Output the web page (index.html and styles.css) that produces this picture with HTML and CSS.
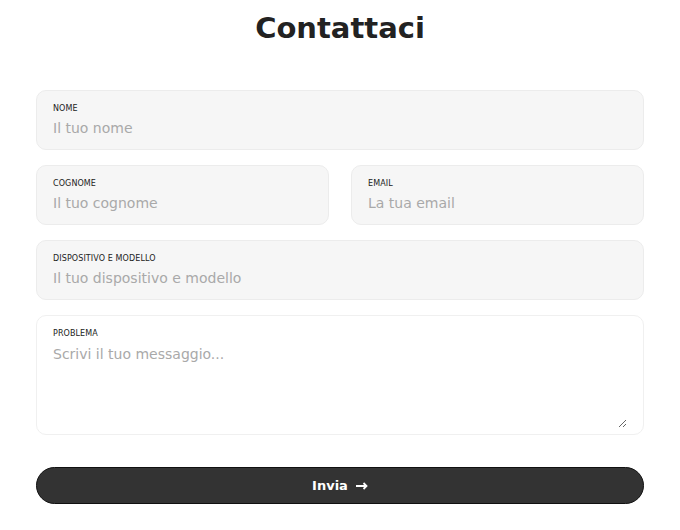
FILE: index.html
```html
<!DOCTYPE html>
<html lang="it">
<head>
    <meta charset="UTF-8">
    <meta name="viewport" content="width=device-width, initial-scale=1.0">
    <title>Contattaci</title>
    <link rel="stylesheet" href="styles.css">
</head>
<body>
    <div class="contact">
        <h1 class="contact-title">Contattaci</h1>

        <form class="contact-form">
            <div class="field">
                <label for="nome">Nome</label>
                <input type="text" id="nome" placeholder="Il tuo nome">
            </div>

            <div class="row">
                <div class="field">
                    <label for="cognome">Cognome</label>
                    <input type="text" id="cognome" placeholder="Il tuo cognome">
                </div>
                <div class="field">
                    <label for="email">Email</label>
                    <input type="email" id="email" placeholder="La tua email">
                </div>
            </div>

            <div class="field">
                <label for="dispositivo">Dispositivo e modello</label>
                <input type="text" id="dispositivo" placeholder="Il tuo dispositivo e modello">
            </div>

            <div class="field field-area">
                <label for="problema">Problema</label>
                <textarea id="problema" placeholder="Scrivi il tuo messaggio..."></textarea>
            </div>

            <button type="submit" class="btn-send">
                Invia
                <svg class="arrow" width="12" height="8" viewBox="0 0 12 8">
                    <path d="M0 4h10.5M7.5 1l3 3-3 3" fill="none" stroke="#fff" stroke-width="1.8"/>
                </svg>
            </button>
        </form>
    </div>
</body>
</html>
```

FILE: styles.css
```css
body {
    margin: 0;
    padding: 0;
    font-family: 'DejaVu Sans', 'Open Sans', sans-serif;
    background-color: #fff;
    color: #222;
}

.contact {
    max-width: 608px;
    margin: 0 auto;
    padding-top: 10px;
}

.contact-title {
    margin: 0 0 44px;
    text-align: center;
    font-size: 29px;
    font-weight: 800;
    color: #222;
    line-height: 36px;
}

.contact-form {
    display: flex;
    flex-direction: column;
    gap: 15px;
}

.row {
    display: grid;
    grid-template-columns: 1fr 1fr;
    gap: 22px;
}

.field {
    display: flex;
    flex-direction: column;
    height: 60px;
    box-sizing: border-box;
    padding: 13px 16px 0;
    background: #f6f6f6;
    border: 1px solid #ececec;
    border-radius: 10px;
}

.field label {
    font-size: 8px;
    text-transform: uppercase;
    letter-spacing: 0.1px;
    color: #222;
    line-height: 10px;
    margin-bottom: 6px;
}

.field input,
.field textarea {
    border: none;
    background: transparent;
    padding: 0;
    font-family: inherit;
    font-size: 14px;
    color: #222;
    outline: none;
}

.field input::placeholder,
.field textarea::placeholder {
    color: #a9a9a9;
}

.field-area {
    height: 120px;
    background: #fff;
    border-color: #f0f0f0;
    padding-bottom: 6px;
}

.field-area textarea {
    flex: 1;
    resize: vertical;
    line-height: 18px;
}

.btn-send {
    display: flex;
    align-items: center;
    justify-content: center;
    gap: 8px;
    margin-top: 17px;
    height: 37px;
    border: 1px solid #111;
    border-radius: 20px;
    background: #333;
    color: #fff;
    font-family: inherit;
    font-size: 13px;
    font-weight: bold;
    cursor: pointer;
}
```
